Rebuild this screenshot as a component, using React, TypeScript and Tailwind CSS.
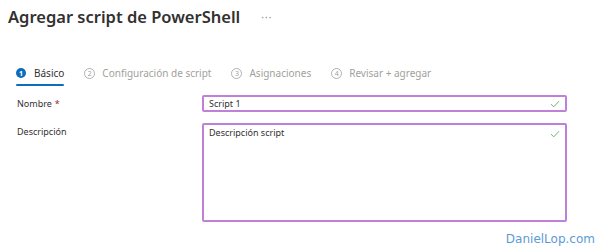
import React from "react";

const Check = () => (
    <svg width="10" height="8" viewBox="0 0 10 8" className="shrink-0">
        <path d="M1 4.2 L3.8 6.8 L9 1.2" fill="none" stroke="#6bb96b" strokeWidth="1" />
    </svg>
);

const Step = ({ n, label, active }: { n: number; label: string; active?: boolean }) => (
    <div className="flex flex-col">
        <div className={active ? "flex items-center gap-[8px] h-[22px]" : "flex items-center gap-[7px] h-[22px]"}>
            {active ? (
                <span className="w-[10px] h-[10px] rounded-full bg-[#0f6cbd] text-white text-[7px] font-bold flex items-center justify-center leading-none">
                    {n}
                </span>
            ) : (
                <span className="w-[11px] h-[11px] rounded-full border border-[#b3b0ad] text-[#a19f9d] text-[7px] flex items-center justify-center leading-none">
                    {n}
                </span>
            )}
            <span className={active ? "text-[#323130] text-[10px]" : "text-[#a19f9d] text-[10px]"}>{label}</span>
        </div>
        <div className={active ? "h-[2px] bg-[#0f6cbd] rounded-full" : "h-[2px]"} />
    </div>
);

const App = () => {
    return (
        <div className="w-[600px] h-[246px] bg-white overflow-hidden font-['Noto_Sans',sans-serif] text-[#323130]">
            <div className="flex items-center pl-[8px] pt-[4px] h-[30px]">
                <h1 className="text-[16.5px] font-semibold whitespace-nowrap">Agregar script de PowerShell</h1>
                <span className="ml-[21px] text-[#8a8886] text-[10px] tracking-[1px] leading-none">···</span>
            </div>
            <div className="flex gap-[20px] pl-[16px] mt-[32px]">
                <Step n={1} label="Básico" active />
                <Step n={2} label="Configuración de script" />
                <Step n={3} label="Asignaciones" />
                <Step n={4} label="Revisar + agregar" />
            </div>
            <div className="grid grid-cols-[185px_365px] gap-y-[11px] pl-[17px] mt-[9px] text-[9px]">
                <div className="flex items-center h-[17px]">
                    Nombre <span className="text-[#a4262c] ml-[3px]">*</span>
                </div>
                <div className="h-[17px] border-2 border-[#c07fd9] rounded-[2px] flex items-center justify-between pl-[5px] pr-[5px]">
                    <span>Script 1</span>
                    <Check />
                </div>
                <div className="pt-[2px]">Descripción</div>
                <div className="h-[99px] border-2 border-[#c07fd9] rounded-[2px] flex items-start justify-between pl-[5px] pr-[5px] pt-[1px]">
                    <span>Descripción script</span>
                    <span className="pt-[4px]"><Check /></span>
                </div>
            </div>
            <div className="flex justify-end pr-[5px] mt-[8px]">
                <span className="font-['DejaVu_Sans',sans-serif] text-[12px] text-[#5b9bd5]">DanielLop.com</span>
            </div>
        </div>
    );
};

export default App;
